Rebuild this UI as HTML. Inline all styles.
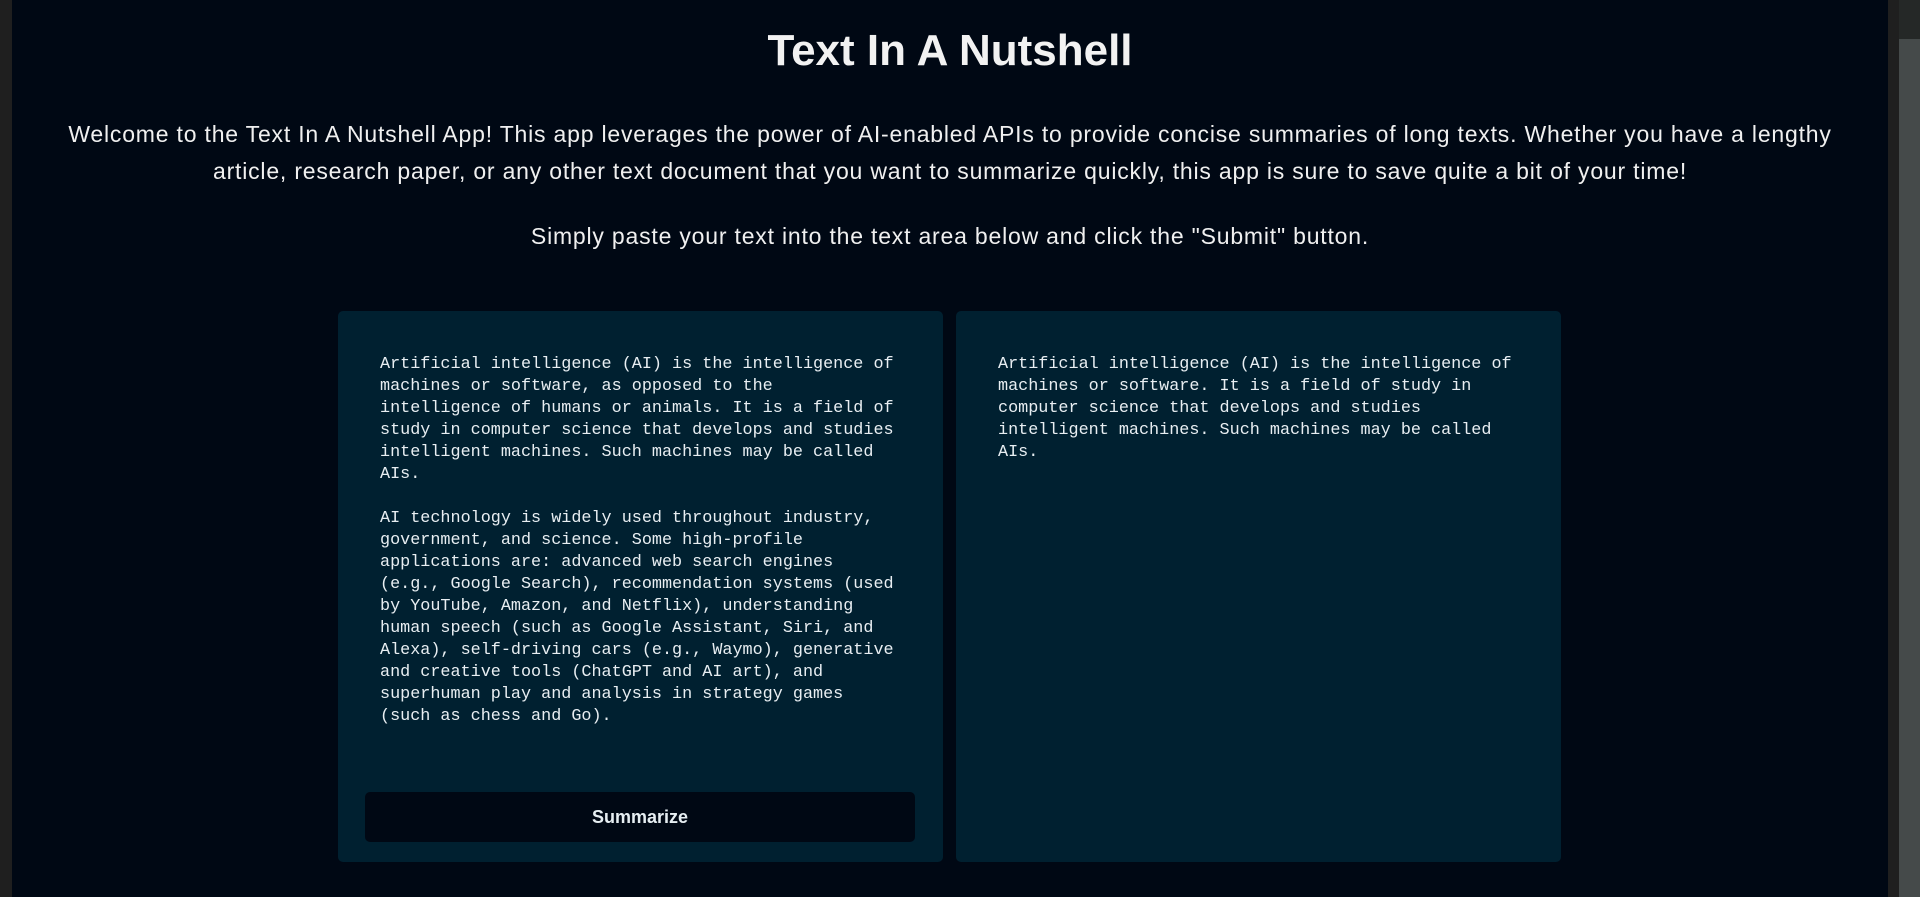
<!DOCTYPE html>
<html><head><meta charset="utf-8"><style>
html,body{margin:0;padding:0;width:1920px;height:897px;overflow:hidden;background:#1f1f1f;font-family:"Liberation Sans",sans-serif;}
.main{position:absolute;left:12px;top:0;width:1876px;height:897px;background:#000814;color:#f0f0f0;}
.track{position:absolute;left:1899px;top:0;width:21px;height:897px;background:#252827;}
.thumb{position:absolute;left:1899px;top:39px;width:21px;height:858px;background:#454a4a;}
h1{position:absolute;left:0;width:1876px;top:25px;margin:0;text-align:center;font-size:44px;font-weight:bold;line-height:52px;color:#f2f2f2;}
.p{position:absolute;left:30px;width:1816px;text-align:center;font-size:23px;letter-spacing:0.8px;line-height:37px;margin:0;color:#f0f0f0;}
.panel{position:absolute;top:311px;width:605px;height:551px;background:#002030;border-radius:5px;}
.txt{position:absolute;left:42px;top:43px;width:540px;font-family:"Liberation Mono",monospace;font-size:16.8px;line-height:22px;white-space:pre;color:#e8eef2;}
.btn{position:absolute;left:27px;top:481px;width:550px;height:50px;background:#000814;border-radius:5px;color:#e6eef2;font-weight:bold;font-size:18px;text-align:center;line-height:50px;}
</style></head><body>
<div class="main">
<h1>Text In A Nutshell</h1>
<p class="p" style="top:116px">Welcome to the Text In A Nutshell App! This app leverages the power of AI-enabled APIs to provide concise summaries of long texts. Whether you have a lengthy<br>article, research paper, or any other text document that you want to summarize quickly, this app is sure to save quite a bit of your time!</p>
<p class="p" style="top:218px">Simply paste your text into the text area below and click the "Submit" button.</p>
<div class="panel" style="left:326px"><div class="txt">Artificial intelligence (AI) is the intelligence of
machines or software, as opposed to the
intelligence of humans or animals. It is a field of
study in computer science that develops and studies
intelligent machines. Such machines may be called
AIs.

AI technology is widely used throughout industry,
government, and science. Some high-profile
applications are: advanced web search engines
(e.g., Google Search), recommendation systems (used
by YouTube, Amazon, and Netflix), understanding
human speech (such as Google Assistant, Siri, and
Alexa), self-driving cars (e.g., Waymo), generative
and creative tools (ChatGPT and AI art), and
superhuman play and analysis in strategy games
(such as chess and Go).</div>
<div class="btn">Summarize</div></div>
<div class="panel" style="left:944px"><div class="txt">Artificial intelligence (AI) is the intelligence of
machines or software. It is a field of study in
computer science that develops and studies
intelligent machines. Such machines may be called
AIs.</div></div>
</div>
<div class="track"></div><div class="thumb"></div>
</body></html>
